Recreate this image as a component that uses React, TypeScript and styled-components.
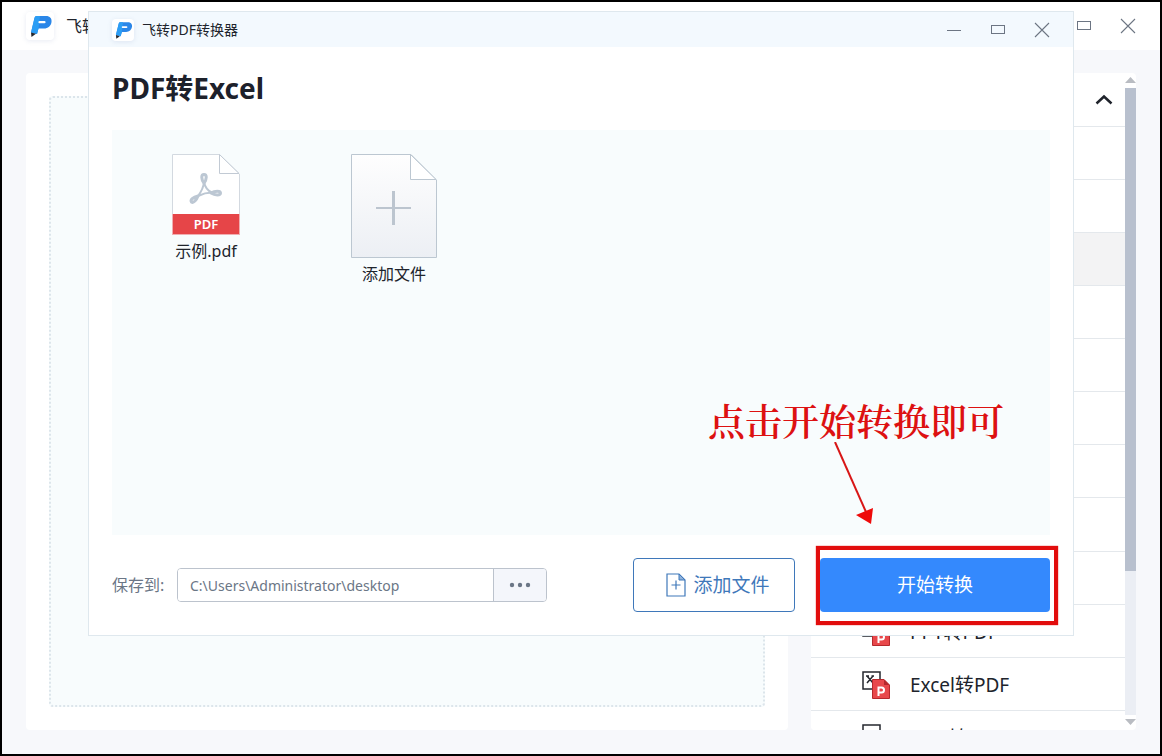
import React from "react";
import styled, { createGlobalStyle } from "styled-components";

const GlobalStyle = createGlobalStyle`
  * { box-sizing: border-box; }
  body { margin: 0; }
  body, button, input {
    font-family: "Noto Sans", "Noto Sans CJK SC", sans-serif;
  }
  button { cursor: pointer; }
  h1, h2, p, ul { margin: 0; padding: 0; }
`;

const Frame = styled.div`
  position: relative;
  display: flex;
  flex-direction: column;
  height: 100vh;
  border: 2px solid #000;
  background: #f7f8fb;
  overflow: hidden;
`;

const TitleBar = styled.header<{ $compact?: boolean }>`
  display: flex;
  align-items: center;
  flex: none;
  height: ${(p) => (p.$compact ? "35px" : "48px")};
  padding: ${(p) => (p.$compact ? "0 9px 0 23px" : "0 10px 0 24px")};
  background: ${(p) => (p.$compact ? "#f3f9fe" : "#fff")};
`;

const AppName = styled.p<{ $compact?: boolean }>`
  flex: 1;
  margin-left: ${(p) => (p.$compact ? "8px" : "12px")};
  color: #20242c;
  font-size: ${(p) => (p.$compact ? "14px" : "16px")};
  line-height: 24px;
`;

const LogoTile = styled.span<{ $size: number }>`
  display: flex;
  flex: none;
  width: ${(p) => p.$size}px;
  height: ${(p) => p.$size}px;
  border-radius: 4px;
  background: #fff;
  box-shadow: 0 1px 5px rgba(90, 110, 170, 0.14);
`;

const WindowButton = styled.button`
  display: flex;
  align-items: center;
  justify-content: center;
  width: 44px;
  height: 32px;
  padding: 0;
  border: 0;
  background: none;
  color: #6c7583;
`;

const Body = styled.main`
  display: flex;
  flex: 1;
  gap: 23px;
  min-height: 0;
  padding: 23px 24px 24px;
`;

const DropCard = styled.section`
  display: flex;
  flex: 1;
  padding: 23px;
  border-radius: 4px;
  background: #fff;
`;

const DropZone = styled.div`
  flex: 1;
  border: 2px dotted #dce5eb;
  border-radius: 4px;
  background: #f8fcfd;
`;

const ToolPanel = styled.aside`
  display: flex;
  width: 325px;
  border-radius: 4px;
  background: #fff;
  overflow: hidden;
`;

const ToolScroll = styled.div`
  flex: 1;
  overflow: hidden;
`;

const GroupHeader = styled.button`
  display: flex;
  align-items: center;
  justify-content: flex-end;
  width: 100%;
  height: 54px;
  padding: 0 11px;
  border: 0;
  border-bottom: 1px solid #e4e8ec;
  background: #fff;
  color: #20242c;
`;

const ToolList = styled.ul`
  list-style: none;
`;

const ToolRow = styled.li<{ $active?: boolean }>`
  display: flex;
  align-items: center;
  gap: 20px;
  height: 53px;
  padding: 2px 0 0 50px;
  border-bottom: 1px solid #e4e8ec;
  background: ${(p) => (p.$active ? "#f3f3f4" : "#fff")};
  color: #20242c;
  font-size: 19px;
  line-height: 28px;
`;

const ScrollBar = styled.div`
  display: flex;
  flex-direction: column;
  width: 11px;
`;

const ScrollArrow = styled.svg`
  display: block;
  flex: none;
  width: 11px;
  height: 15px;
`;

const ScrollTrack = styled.div`
  flex: 1;
  background: #ebeef4;
`;

const ScrollThumb = styled.div`
  height: 77%;
  background: #b8c0ce;
`;

const Dialog = styled.section`
  position: absolute;
  top: 9px;
  right: 86px;
  bottom: 118px;
  left: 86px;
  display: flex;
  flex-direction: column;
  border: 1px solid #dfe8ee;
  background: #fff;
`;

const DialogBody = styled.div`
  display: flex;
  flex: 1;
  flex-direction: column;
  min-height: 0;
  padding: 0 23px 23px;
`;

const Heading = styled.h1`
  flex: none;
  padding: 21px 0 22px;
  color: #1d212b;
  font-size: 28px;
  font-weight: 700;
  line-height: 40px;
`;

const FileArea = styled.div`
  display: flex;
  flex: 1;
  align-items: flex-start;
  min-height: 0;
  padding-top: 24px;
  background: #f8fcfd;
`;

const FileTile = styled.button`
  display: flex;
  flex-direction: column;
  align-items: center;
  gap: 4px;
  width: 188px;
  padding: 0;
  border: 0;
  background: none;
  color: #20242c;
  font-size: 16px;
  line-height: 24px;
`;

const Footer = styled.footer`
  display: flex;
  flex: none;
  align-items: center;
  margin-top: 23px;
`;

const SaveLabel = styled.label`
  width: 65px;
  color: #6b7686;
  font-size: 16px;
  line-height: 24px;
  white-space: nowrap;
`;

const PathField = styled.div`
  display: flex;
  width: 370px;
  height: 34px;
  border: 1px solid #bcc3cd;
  border-radius: 4px;
  overflow: hidden;
`;

const PathInput = styled.input`
  flex: 1;
  min-width: 0;
  padding: 0 12px;
  border: 0;
  outline: 0;
  background: #fff;
  color: #6b7686;
  font-size: 14px;
`;

const BrowseButton = styled.button`
  display: flex;
  align-items: center;
  justify-content: center;
  width: 53px;
  padding: 0;
  border: 0;
  border-left: 1px solid #bcc3cd;
  background: #f4f6fb;
  color: #6b7686;
`;

const Actions = styled.div`
  display: flex;
  gap: 25px;
  margin-left: auto;
`;

const ActionButton = styled.button<{ $primary?: boolean }>`
  display: flex;
  align-items: center;
  justify-content: center;
  gap: 7px;
  width: ${(p) => (p.$primary ? "230px" : "162px")};
  height: 54px;
  padding: ${(p) => (p.$primary ? "0" : "0 0 0 8px")};
  border: ${(p) => (p.$primary ? "0" : "1px solid #3f78ba")};
  border-radius: 4px;
  background: ${(p) => (p.$primary ? "#3489fd" : "#fff")};
  color: ${(p) => (p.$primary ? "#fff" : "#3f78ba")};
  font-size: 19px;
  line-height: 28px;
`;

const Highlighted = styled.div`
  position: relative;
`;

const RedOutline = styled.span`
  position: absolute;
  inset: -12px -8px -13px -4px;
  border: 4px solid #e20d0d;
  box-shadow: 0 0 1px #e20d0d;
  pointer-events: none;
`;

const Callout = styled.div`
  position: absolute;
  right: 46px;
  bottom: 88px;
  width: 296px;
  pointer-events: none;
`;

const CalloutText = styled.p`
  color: #dd1111;
  font-family: "Noto Serif CJK SC", "Noto Sans CJK SC", serif;
  font-size: 37px;
  font-weight: 600;
  line-height: 44px;
  white-space: nowrap;
`;

const CalloutArrow = styled.svg`
  display: block;
  margin-left: 120px;
`;

const Logo = ({ size }: { size: number }) => (
  <LogoTile $size={size}>
    <svg width={size} height={size} viewBox="0 0 28 28" aria-hidden="true">
      <path
        d="M11 4H20C24 4 26 6.500 25.500 10C25 14 22 16.500 18 16.500H12.500L11 22L5 20.500L8.500 6C9 4.500 9.500 4 11 4Z"
        fill="#2a86e8"
      />
      <path d="M11 4H14L12.500 16.500L11 22L5 20.500L8.500 6C9 4.500 9.500 4 11 4Z" fill="#2b9df4" />
      <path d="M13.500 10.200H18.500" stroke="#fff" strokeWidth="2.200" strokeLinecap="round" />
      <path d="M5 20.500L10 21.800L5.500 25Z" fill="#26282e" />
    </svg>
  </LogoTile>
);

const MinimizeIcon = () => (
  <svg width="16" height="16" aria-hidden="true">
    <path d="M1 8.500H15" stroke="currentColor" />
  </svg>
);

const MaximizeIcon = () => (
  <svg width="16" height="16" fill="none" aria-hidden="true">
    <rect x="1.500" y="3.500" width="13" height="8" stroke="currentColor" />
  </svg>
);

const CloseIcon = () => (
  <svg width="16" height="16" aria-hidden="true">
    <path d="M1 1L15 15M15 1L1 15" stroke="currentColor" strokeWidth="1.100" />
  </svg>
);

const ChevronUp = () => (
  <svg width="20" height="20" fill="none" aria-hidden="true">
    <path d="M2.500 13.500L10 6.500L17.500 13.500" stroke="currentColor" strokeWidth="2.500" />
  </svg>
);

const PdfFileIcon = () => (
  <svg width="68" height="81" viewBox="0 0 68 81" aria-hidden="true">
    <path d="M.5 .5H47.500L67.500 20V80.500H.5Z" fill="#fff" stroke="#d3d9e0" />
    <path d="M47.500 .5V19.500H67Z" fill="#fff" stroke="#c2cad4" />
    <rect x="0" y="60" width="68" height="21" fill="#f0aeb1" />
    <rect x="1" y="60" width="66" height="20" fill="#e64548" />
    <g fill="none" stroke="#bcc7d3" strokeLinejoin="round" strokeLinecap="round">
      <path d="M32 29C29 25 29 20.500 32 20.500C35 20.500 35 25 32 29Z" strokeWidth="3" />
      <path d="M26 42C21 43 18 46 19.500 48C21.500 49.500 24.500 46 26 42Z" strokeWidth="3" />
      <path d="M39 39C43 36.500 48.500 36.500 48.500 39C48.500 41.500 43 41.500 39 39Z" strokeWidth="3" />
      <path d="M32 28C31.500 34 29 38 26 42C30 40 35 38.500 40 38.500C36 37 33 33 32 28Z" strokeWidth="2" />
    </g>
    <text x="34" y="75" textAnchor="middle" fill="#fff" fontSize="13" fontWeight="600">
      PDF
    </text>
  </svg>
);

const NewFileIcon = () => (
  <svg width="86" height="104" viewBox="0 0 86 104" aria-hidden="true">
    <defs>
      <linearGradient id="sheet" x1="0" y1="0" x2="0" y2="1">
        <stop offset="0" stopColor="#fefefe" />
        <stop offset="1" stopColor="#eceff4" />
      </linearGradient>
    </defs>
    <path d="M.5 .5H60L85.500 26V103.500H.5Z" fill="url(#sheet)" stroke="#bcc7d1" />
    <path d="M59.500 .5V25.500H85Z" fill="#fff" stroke="#bcc7d1" />
    <path d="M42.500 37V71" stroke="#bcc5cf" strokeWidth="3" />
    <path d="M25 54H60" stroke="#bcc5cf" strokeWidth="2" />
  </svg>
);

const AddFileIcon = () => (
  <svg width="20" height="24" viewBox="0 0 20 24" fill="none" stroke="currentColor" aria-hidden="true">
    <path d="M1 1H13L19 7V23H1Z" strokeWidth="1.200" />
    <path d="M13 1V7H19Z" fill="#8fb2dc" />
    <path d="M10 7.500V16.500M5.500 12H14.500" strokeWidth="1.200" />
  </svg>
);

const DotsIcon = () => (
  <svg width="22" height="6" fill="currentColor" aria-hidden="true">
    <circle cx="3" cy="3" r="2.200" />
    <circle cx="11" cy="3" r="2.200" />
    <circle cx="19" cy="3" r="2.200" />
  </svg>
);

const sourceMarks: Record<string, string> = {
  excel: "M6 5L12 12M12 5L6 12M5 5H8M10.500 5H13",
  ppt: "M6 13V6H12V10H6",
  cad: "M12 7H7V13H12",
};

const ToPdfIcon = ({ source }: { source: string }) => (
  <svg width="29" height="29" viewBox="0 0 29 29" fill="none" aria-hidden="true">
    <rect x="2" y="1" width="17" height="17" fill="#fff" stroke="#24272e" strokeWidth="1.500" />
    <path d={sourceMarks[source]} stroke="#24272e" strokeWidth="1.500" />
    <path d="M11.500 8.500H23L28.500 14V27.500H11.500Z" fill="#e8484b" stroke="#b5282c" />
    <path d="M23 8.500V14H28.500Z" fill="#b5282c" />
    <path d="M17.500 25V16.500H20.500A2.200 2.200 0 0 1 20.500 21.500H17.500" stroke="#fff" strokeWidth="2" />
  </svg>
);

const Controls = ({ target }: { target: string }) => (
  <>
    <WindowButton aria-label={`Minimize ${target}`}>
      <MinimizeIcon />
    </WindowButton>
    <WindowButton aria-label={`Maximize ${target}`}>
      <MaximizeIcon />
    </WindowButton>
    <WindowButton aria-label={`Close ${target}`}>
      <CloseIcon />
    </WindowButton>
  </>
);

const exportRows = [0, 1, 2, 3, 4, 5, 6];

export default function App() {
  return (
    <>
      <GlobalStyle />
      <Frame>
        <TitleBar>
          <Logo size={28} />
          <AppName>飞转PDF转换器</AppName>
          <Controls target="window" />
        </TitleBar>

        <Body>
          <DropCard>
            <DropZone />
          </DropCard>
          <ToolPanel>
            <ToolScroll>
              <GroupHeader aria-label="Collapse group">
                <ChevronUp />
              </GroupHeader>
              <ToolList>
                {exportRows.map((row) => (
                  <ToolRow key={row} $active={row === 2} />
                ))}
              </ToolList>
              <GroupHeader aria-label="Second group" />
              <ToolList>
                <ToolRow />
                <ToolRow>
                  <ToPdfIcon source="ppt" />
                  PPT转PDF
                </ToolRow>
                <ToolRow>
                  <ToPdfIcon source="excel" />
                  Excel转PDF
                </ToolRow>
                <ToolRow>
                  <ToPdfIcon source="cad" />
                  CAD转PDF
                </ToolRow>
              </ToolList>
            </ToolScroll>
            <ScrollBar>
              <ScrollArrow viewBox="0 0 11 15">
                <path d="M0 10L5.500 4L11 10Z" fill="#b9bcc2" />
              </ScrollArrow>
              <ScrollTrack>
                <ScrollThumb />
              </ScrollTrack>
              <ScrollArrow viewBox="0 0 11 15">
                <path d="M0 4L5.500 10L11 4Z" fill="#b9bcc2" />
              </ScrollArrow>
            </ScrollBar>
          </ToolPanel>
        </Body>

        <Dialog role="dialog" aria-labelledby="dialog-heading">
          <TitleBar $compact>
            <Logo size={22} />
            <AppName $compact>飞转PDF转换器</AppName>
            <Controls target="dialog" />
          </TitleBar>
          <DialogBody>
            <Heading id="dialog-heading">PDF转Excel</Heading>
            <FileArea>
              <FileTile>
                <PdfFileIcon />
                示例.pdf
              </FileTile>
              <FileTile>
                <NewFileIcon />
                添加文件
              </FileTile>
            </FileArea>
            <Footer>
              <SaveLabel htmlFor="save-path">保存到:</SaveLabel>
              <PathField>
                <PathInput id="save-path" defaultValue="C:\Users\Administrator\desktop" />
                <BrowseButton aria-label="Browse">
                  <DotsIcon />
                </BrowseButton>
              </PathField>
              <Actions>
                <ActionButton>
                  <AddFileIcon />
                  添加文件
                </ActionButton>
                <Highlighted>
                  <ActionButton $primary>开始转换</ActionButton>
                  <RedOutline />
                  <Callout>
                    <CalloutText>点击开始转换即可</CalloutText>
                    <CalloutArrow width="56" height="82" viewBox="0 0 56 82">
                      <path d="M7 0L38 70" stroke="#d81616" strokeWidth="2" />
                      <path d="M28 73L45 66L43 82Z" fill="#ee0a0a" />
                    </CalloutArrow>
                  </Callout>
                </Highlighted>
              </Actions>
            </Footer>
          </DialogBody>
        </Dialog>
      </Frame>
    </>
  );
}
